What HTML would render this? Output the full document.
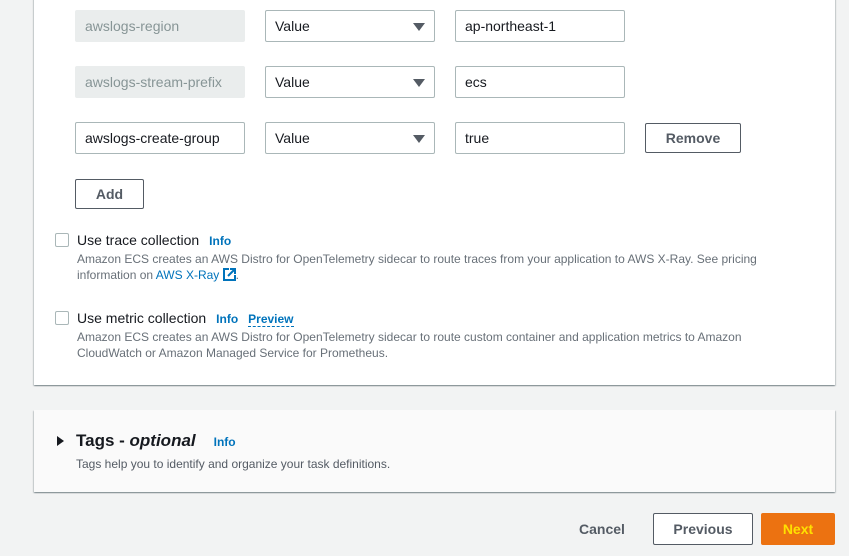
<!DOCTYPE html>
<html><head><style>
body{margin:0;width:849px;height:556px;background:#f2f3f3;font-family:"Liberation Sans",sans-serif;position:relative;overflow:hidden;color:#16191f}
.a{position:absolute}
.card{left:34px;width:801px;background:#fff;box-shadow:0 1px 1px 0 rgba(0,28,36,.3),1px 1px 1px 0 rgba(0,28,36,.15),-1px 1px 1px 0 rgba(0,28,36,.15)}
.in{position:absolute;border:1px solid #aab7b8;border-radius:2px;box-sizing:border-box;height:32px;font-size:14px;line-height:30px;padding-left:9px;background:#fff}
.dis{background:#eaeded;border-color:#eaeded;color:#879596}
.sel::after{content:"";position:absolute;right:9px;top:12px;border-left:6px solid transparent;border-right:6px solid transparent;border-top:8px solid #545b64}
.btn{position:absolute;border:1px solid #545b64;border-radius:2px;box-sizing:border-box;font-weight:bold;font-size:14px;color:#545b64;text-align:center;background:#fff}
.cb{position:absolute;width:14px;height:14px;border:1px solid #aab7b8;border-radius:2px;box-sizing:border-box;background:#fff}
.lbl{position:absolute;font-size:14px;white-space:nowrap}
.info{color:#0073bb;font-weight:bold;font-size:12px;margin-left:10px}
.desc{position:absolute;font-size:12px;color:#687078;line-height:16px;white-space:nowrap}
a{color:#0073bb;text-decoration:none}
</style></head><body>
<div class="a card" style="top:-5px;height:390px"></div>
<div class="in dis" style="left:75px;top:10px;width:170px">awslogs-region</div>
<div class="in sel" style="left:265px;top:10px;width:170px">Value</div>
<div class="in" style="left:455px;top:10px;width:170px">ap-northeast-1</div>
<div class="in dis" style="left:75px;top:66px;width:170px">awslogs-stream-prefix</div>
<div class="in sel" style="left:265px;top:66px;width:170px">Value</div>
<div class="in" style="left:455px;top:66px;width:170px">ecs</div>
<div class="in" style="left:75px;top:122px;width:170px">awslogs-create-group</div>
<div class="in sel" style="left:265px;top:122px;width:170px">Value</div>
<div class="in" style="left:455px;top:122px;width:170px">true</div>
<div class="btn" style="left:645px;top:123px;width:96px;height:30px;line-height:28px">Remove</div>
<div class="btn" style="left:75px;top:179px;width:69px;height:30px;line-height:28px">Add</div>

<div class="cb" style="left:55px;top:233px"></div>
<div class="lbl" style="left:77px;top:232px">Use trace collection<span class="info">Info</span></div>
<div class="desc" style="left:77px;top:251px">Amazon ECS creates an AWS Distro for OpenTelemetry sidecar to route traces from your application to AWS X-Ray. See pricing<br>information on <a>AWS X-Ray <svg width="13" height="13" viewBox="0 0 13 13" style="vertical-align:-2px"><path d="M6 1H1v11h11V7" fill="none" stroke="#0073bb" stroke-width="2"/><path d="M7 1h5v5M12 1L5 8" fill="none" stroke="#0073bb" stroke-width="2"/></svg></a>.</div>

<div class="cb" style="left:55px;top:311px"></div>
<div class="lbl" style="left:77px;top:310px">Use metric collection<span class="info">Info</span><span class="info" style="border-bottom:1px dashed #0073bb">Preview</span></div>
<div class="desc" style="left:77px;top:329px">Amazon ECS creates an AWS Distro for OpenTelemetry sidecar to route custom container and application metrics to Amazon<br>CloudWatch or Amazon Managed Service for Prometheus.</div>

<div class="a card" style="top:410px;height:82px;background:#fafafa"></div>
<div class="a" style="left:57px;top:436px;border-top:5px solid transparent;border-bottom:5px solid transparent;border-left:7px solid #16191f"></div>
<div class="lbl" style="left:76px;top:431px;font-size:17px;font-weight:bold">Tags - <i>optional</i><span class="info" style="margin-left:18px">Info</span></div>
<div class="desc" style="left:76px;top:456px;font-size:12px;color:#545b64">Tags help you to identify and organize your task definitions.</div>

<div class="lbl" style="left:579px;top:521px;font-weight:bold;color:#545b64">Cancel</div>
<div class="btn" style="left:653px;top:513px;width:100px;height:32px;line-height:30px">Previous</div>
<div class="btn" style="left:761px;top:513px;width:74px;height:32px;line-height:30px;background:#ec7211;border-color:#ec7211;color:#ffe100">Next</div>
</body></html>
